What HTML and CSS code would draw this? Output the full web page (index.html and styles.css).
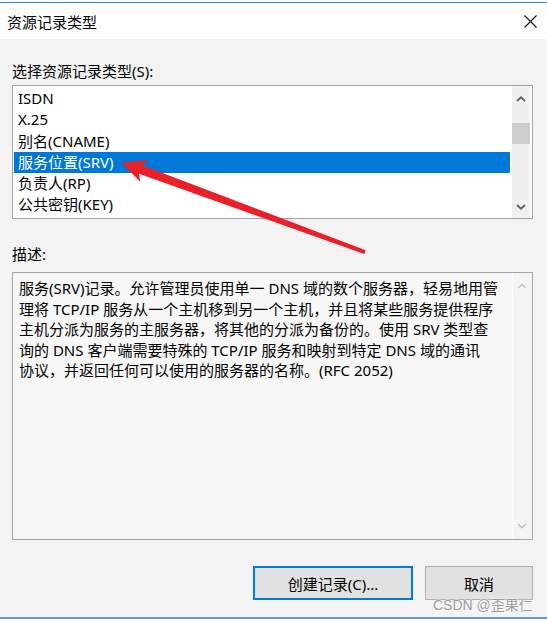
FILE: index.html
```html
<!DOCTYPE html>
<html lang="zh-CN">
<head>
<meta charset="utf-8">
<title>资源记录类型</title>
<link rel="stylesheet" href="styles.css">
</head>
<body>
<div class="window">
  <div class="titlebar">
    <span class="title">资源记录类型</span>
    <span class="close" aria-label="关闭">
      <svg width="13" height="13" viewBox="0 0 13 13"><path d="M0.5 0.5 L12.5 12.5 M12.5 0.5 L0.5 12.5" stroke="#111" stroke-width="1.1" fill="none"/></svg>
    </span>
  </div>
  <div class="content">
    <div class="label">选择资源记录类型(S):</div>
    <div class="listbox">
      <ul class="items">
        <li>ISDN</li>
        <li>X.25</li>
        <li>别名(CNAME)</li>
        <li class="selected">服务位置(SRV)</li>
        <li>负责人(RP)</li>
        <li>公共密钥(KEY)</li>
      </ul>
      <div class="vscroll">
        <div class="arrow arrow-up"><svg width="10" height="6" viewBox="0 0 10 6"><path d="M1 5 L5 1.3 L9 5" stroke="#606060" stroke-width="1.8" fill="none"/></svg></div>
        <div class="thumb"></div>
        <div class="track-fill"></div>
        <div class="arrow arrow-down"><svg width="10" height="6" viewBox="0 0 10 6"><path d="M1 1 L5 4.7 L9 1" stroke="#606060" stroke-width="1.8" fill="none"/></svg></div>
      </div>
    </div>
    <div class="label label-desc">描述:</div>
    <div class="descbox">
      <div class="desc-text">
        <div class="line">服务(SRV)记录。允许管理员使用单一 DNS 域的数个服务器，轻易地用管</div>
        <div class="line">理将 TCP/IP 服务从一个主机移到另一个主机，并且将某些服务提供程序</div>
        <div class="line">主机分派为服务的主服务器，将其他的分派为备份的。使用 SRV 类型查</div>
        <div class="line">询的 DNS 客户端需要特殊的 TCP/IP 服务和映射到特定 DNS 域的通讯</div>
        <div class="line">协议，并返回任何可以使用的服务器的名称。(RFC 2052)</div>
      </div>
      <div class="vscroll vscroll-disabled">
        <div class="arrow arrow-up2"><svg width="10" height="6" viewBox="0 0 10 6"><path d="M1 5 L5 1.3 L9 5" stroke="#c4c4c4" stroke-width="1.6" fill="none"/></svg></div>
        <div class="track-fill"></div>
        <div class="arrow arrow-down2"><svg width="10" height="6" viewBox="0 0 10 6"><path d="M1 1 L5 4.7 L9 1" stroke="#c4c4c4" stroke-width="1.6" fill="none"/></svg></div>
      </div>
    </div>
    <div class="buttons">
      <button class="btn btn-default">创建记录(C)...</button>
      <button class="btn btn-cancel">取消</button>
    </div>
  </div>
</div>
<div class="watermark">CSDN @歪果仁</div>
<svg class="annotation" width="547" height="621" viewBox="0 0 547 621">
  <polygon fill="#ea1f28" points="121.7,162.7 148.25,160.08 142.04,165.37 365.69,250.15 364.31,253.91 138.94,173.83 140.25,181.88"/>
</svg>
</body>
</html>
```

FILE: styles.css
```css
* {
  box-sizing: border-box;
}

html, body {
  margin: 0;
  padding: 0;
}

body {
  width: 547px;
  height: 621px;
  background: #ffffff;
  position: relative;
  overflow: hidden;
  font-family: "Noto Sans", "Noto Sans CJK SC", sans-serif;
  font-size: 15px;
  color: #000;
}

.window {
  margin-top: 2px;
  border-top: 1px solid #2b88d8;
  border-bottom: 2px solid #5c9fdc;
}

.titlebar {
  height: 36px;
  background: #ffffff;
  display: flex;
  align-items: center;
  justify-content: space-between;
  padding-left: 7px;
}

.title {
  font-family: "Noto Sans CJK SC", sans-serif;
  font-size: 15px;
  line-height: 20px;
  padding-top: 2px;
}

.close {
  width: 34px;
  height: 36px;
  display: flex;
  align-items: center;
  justify-content: center;
}

.content {
  height: 578px;
  background: #f3f3f3;
  padding: 22px 14px 0 12px;
}

.label {
  height: 20px;
  line-height: 20px;
  font-size: 15px;
}

.listbox {
  margin-top: 4px;
  height: 134px;
  border: 1px solid #a3a3a8;
  background: #ffffff;
  display: flex;
  padding: 0 2px 0 1px;
}

.items {
  list-style: none;
  margin: 0 2px 0 0;
  padding: 2px 0 0 0;
  flex: 1;
}

.items li {
  height: 21.3px;
  line-height: 21.3px;
  padding-left: 4px;
  white-space: nowrap;
}

.items li.selected {
  background: #0078d7;
  color: #ffffff;
}

.vscroll {
  width: 18px;
  background: #f0f0f0;
  display: flex;
  flex-direction: column;
}

.arrow {
  display: flex;
  align-items: center;
  justify-content: center;
}

.arrow-up {
  height: 26px;
}

.thumb {
  margin-top: 11px;
  height: 21px;
  background: #cdcdcd;
}

.track-fill {
  flex: 1;
}

.arrow-down {
  height: 22px;
}

.label-desc {
  margin-top: 25px;
}

.descbox {
  margin-top: 8px;
  height: 268px;
  border: 1px solid #a3a3a8;
  background: #f7f7f7;
  display: flex;
  padding: 0 2px 0 1px;
}

.desc-text {
  flex: 1;
  padding: 5px 0 0 5px;
  line-height: 20.5px;
}

.line {
  white-space: nowrap;
}

.vscroll-disabled {
  background: #f4f4f4;
  border-left: 1px solid #fcfcfc;
}

.arrow-up2 {
  height: 26px;
}

.arrow-down2 {
  height: 26px;
}

.buttons {
  margin-top: 26px;
  display: flex;
  justify-content: flex-end;
  gap: 12px;
}

.btn {
  height: 34px;
  font-family: "Noto Sans", "Noto Sans CJK SC", sans-serif;
  font-size: 15px;
  color: #000;
  background: #e1e1e1;
  padding: 0;
  margin: 0;
}

.btn-default {
  width: 160px;
  border: 2px solid #0078d7;
}

.btn-cancel {
  width: 108px;
  border: 1px solid #adadad;
}

.watermark {
  position: absolute;
  left: 433px;
  top: 597px;
  font-family: "Liberation Sans", "Noto Sans CJK SC", sans-serif;
  font-size: 14px;
  line-height: 16px;
  color: #9a9a9a;
  text-shadow: 0 0 1px #fff, 0 0 1px #fff, 0 0 2px #fff;
  white-space: nowrap;
}

.annotation {
  position: absolute;
  left: 0;
  top: 0;
  pointer-events: none;
}
```
